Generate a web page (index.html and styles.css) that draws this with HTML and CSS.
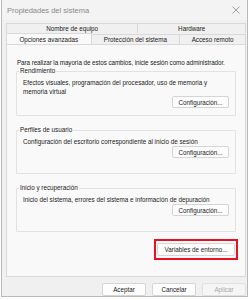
FILE: index.html
```html
<!DOCTYPE html>
<html lang="es">
<head>
<meta charset="utf-8">
<link rel="stylesheet" href="styles.css">
</head>
<body>
<div class="window">
  <div class="titlebar">
    <span class="title">Propiedades del sistema</span>
    <svg class="close" width="8" height="8" viewBox="0 0 8 8"><path d="M0.5 0.5L7.5 7.5M7.5 0.5L0.5 7.5" stroke="#8a8a8a" stroke-width="0.8" fill="none"/></svg>
  </div>
  <div class="content">
    <div class="tabs">
      <div class="tabrow row1">
        <div class="tab t-nombre">Nombre de equipo</div>
        <div class="tab t-hard">Hardware</div>
      </div>
      <div class="tabrow row2">
        <div class="tab t-opc active">Opciones avanzadas</div>
        <div class="tab t-prot">Protección del sistema</div>
        <div class="tab t-acc">Acceso remoto</div>
      </div>
    </div>
    <div class="panel">
      <p class="note">Para realizar la mayoría de estos cambios, inicie sesión como administrador.</p>
      <fieldset class="group g1">
        <legend>Rendimiento</legend>
        <p class="desc">Efectos visuales, programación del procesador, uso de memoria y memoria virtual</p>
        <div class="actions"><button class="btn">Configuración...</button></div>
      </fieldset>
      <fieldset class="group g2">
        <legend>Perfiles de usuario</legend>
        <p class="desc">Configuración del escritorio correspondiente al inicio de sesión</p>
        <div class="actions"><button class="btn">Configuración...</button></div>
      </fieldset>
      <fieldset class="group g3">
        <legend>Inicio y recuperación</legend>
        <p class="desc">Inicio del sistema, errores del sistema e información de depuración</p>
        <div class="actions"><button class="btn">Configuración...</button></div>
      </fieldset>
      <div class="env-row">
        <div class="highlight"><button class="btn env">Variables de entorno...</button></div>
      </div>
    </div>
    <div class="footer">
      <button class="btn fbtn">Aceptar</button>
      <button class="btn fbtn">Cancelar</button>
      <button class="btn fbtn disabled">Aplicar</button>
    </div>
  </div>
</div>
</body>
</html>
```

FILE: styles.css
```css
html, body {
  margin: 0;
  padding: 0;
  background: #ffffff;
}
body {
  font-family: "Liberation Sans", Arial, sans-serif;
  font-size: 6.3px;
  color: #1a1a1a;
  width: 251px;
  height: 300px;
  overflow: hidden;
}
.window {
  margin-left: 1px;
  width: 247px;
  height: 297px;
  background: #f0f0f0;
  border: 1px solid #b9b9b9;
  border-top: none;
  box-sizing: border-box;
  display: flex;
  flex-direction: column;
}
.titlebar {
  height: 20px;
  background: #f3f3f3;
  display: flex;
  align-items: center;
  justify-content: space-between;
  padding: 0 7px 0 5px;
  flex: none;
}
.title {
  font-size: 7.5px;
  color: #8a8a8a;
}
.content {
  flex: 1;
  display: flex;
  flex-direction: column;
  padding: 3px 1px 0 4px;
}
.tabs {
  display: flex;
  flex-direction: column;
}
.tabrow {
  display: flex;
  height: 10px;
}
.tab {
  box-sizing: border-box;
  border: 1px solid #d9d9d9;
  border-bottom: none;
  background: #f0f0f0;
  display: flex;
  align-items: center;
  justify-content: center;
  font-size: 6.3px;
}
.row1 .tab { height: 10px; }
.t-nombre { width: 133px; }
.t-hard { width: 108px; border-left: none; }
.row2 { height: 11px; align-items: flex-end; }
.row2 .tab { height: 10px; }
.t-opc { width: 86px; }
.t-prot { width: 89px; border-left: none; }
.t-acc { width: 66px; border-left: none; }
.tab.active {
  height: 11px;
  background: #f9f9f9;
  position: relative;
  z-index: 1;
}
.panel {
  background: #f9f9f9;
  border: 1px solid #d9d9d9;
  height: 233px;
  box-sizing: border-box;
  padding: 9px 9px 0 9px;
  display: flex;
  flex-direction: column;
}
.note {
  margin: 4px 0 0 1px;
  line-height: 9px;
  white-space: nowrap;
  letter-spacing: -0.08px;
}
.group {
  margin: 0;
  border: 1px solid #e2e2e2;
  border-radius: 1px;
  padding: 1px 6px 6px 6px;
  min-width: 0;
  display: flex;
  flex-direction: column;
  box-sizing: border-box;
}
.group legend {
  padding: 0 1px;
  margin-left: -4px;
  font-size: 6.3px;
  line-height: 8px;
}
.g1 { margin-top: 0; height: 49px; }
.g2 { margin-top: 10px; height: 48px; }
.g3 { margin-top: 10px; height: 48px; }
.desc {
  margin: 2px 0 0 0;
  line-height: 9px;
  width: 200px;
}
.g2 .desc, .g3 .desc { width: auto; }
.actions {
  margin-top: auto;
  display: flex;
  justify-content: flex-end;
}
.btn {
  font-family: "Liberation Sans", Arial, sans-serif;
  font-size: 6.3px;
  color: #1a1a1a;
  background: #fdfdfd;
  border: 1px solid #d5d5d5;
  border-radius: 2px;
  height: 12px;
  padding: 0;
  width: 57px;
  box-sizing: border-box;
}
.env-row {
  display: flex;
  justify-content: flex-end;
  margin-top: 7px;
  margin-right: -2px;
}
.highlight {
  border: 2px solid #e81123;
  padding: 2px 1px;
}
.btn.env { width: 78px; height: 13px; }
.footer {
  display: flex;
  justify-content: flex-end;
  gap: 6px;
  padding: 6px 0 0 0;
}
.fbtn { width: 44px; height: 13px; }
.fbtn.disabled { color: #a8a8a8; background: #f5f5f5; border-color: #e0e0e0; }
```
